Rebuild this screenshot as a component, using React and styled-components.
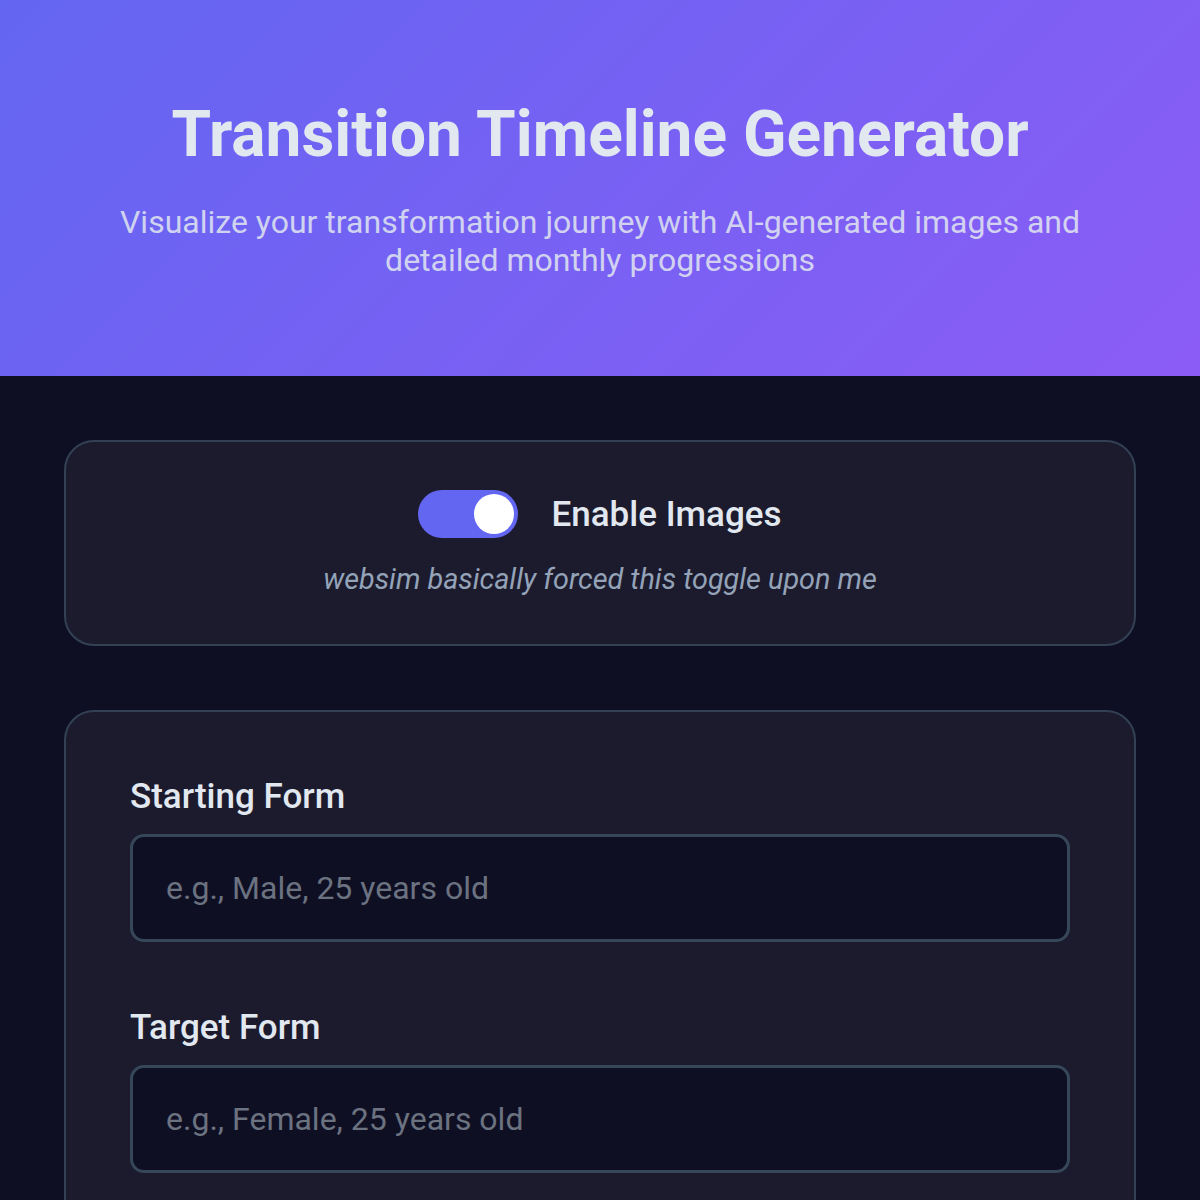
import React, { useState } from "react";
import styled, { createGlobalStyle } from "styled-components";

const Global = createGlobalStyle`
  html, body { margin: 0; padding: 0; background: #0f0f23; }
  body { font-family: Roboto, "Liberation Sans", sans-serif; }
  * { box-sizing: border-box; }
`;

const Page = styled.div`
  min-height: 1200px;
  background: #0f0f23;
`;

const Hero = styled.header`
  height: 376px;
  background: linear-gradient(135deg, #6366f1 0%, #8b5cf6 100%);
  display: flex;
  flex-direction: column;
  align-items: center;
  padding-top: 95px;
  text-align: center;
`;

const Title = styled.h1`
  margin: 0;
  font-size: 64px;
  font-weight: 700;
  line-height: 80px;
  color: #e2e8f0;
`;

const Subtitle = styled.p`
  margin: 28px 0 0;
  font-size: 32px;
  line-height: 38px;
  font-weight: 400;
  color: rgba(226, 232, 240, 0.85);
  max-width: 1000px;
`;

const Main = styled.main`
  padding: 64px 64px;
  display: flex;
  flex-direction: column;
  gap: 64px;
`;

const Card = styled.section`
  background: #1c1b2e;
  border: 2px solid #334155;
  border-radius: 30px;
  padding: ${(p) => p.$pad || "63px 64px"};
`;

const ToggleCard = styled(Card)`
  display: flex;
  flex-direction: column;
  align-items: center;
  gap: 24px;
`;

const ToggleRow = styled.label`
  display: flex;
  align-items: center;
  gap: 33px;
  cursor: pointer;
`;

const Switch = styled.span`
  width: 100px;
  height: 48px;
  border-radius: 24px;
  background: ${(p) => (p.$on ? "#6366f1" : "#475569")};
  display: flex;
  align-items: center;
  justify-content: ${(p) => (p.$on ? "flex-end" : "flex-start")};
  padding: 0 4px;
`;

const Knob = styled.span`
  width: 40px;
  height: 40px;
  border-radius: 50%;
  background: #ffffff;
`;

const ToggleLabel = styled.span`
  font-size: 35px;
  font-weight: 500;
  color: #e2e8f0;
`;

const Note = styled.p`
  margin: 0;
  font-size: 28.8px;
  font-style: italic;
  color: #94a3b8;
`;

const Field = styled.div`
  display: flex;
  flex-direction: column;
  gap: 15px;
  & + & { margin-top: 64px; }
`;

const Label = styled.label`
  font-size: 35px;
  font-weight: 500;
  color: #e2e8f0;
  line-height: 44px;
`;

const Input = styled.input`
  height: 108px;
  border: 3px solid #36475a;
  border-radius: 14px;
  background: #0f0f23;
  padding: 0 33px;
  font-family: Roboto, "Liberation Sans", sans-serif;
  font-size: 32px;
  color: #e2e8f0;
  outline: none;
  &::placeholder { color: #6b7280; }
`;

export default function App() {
  const [on, setOn] = useState(true);
  return (
    <Page>
      <Global />
      <Hero>
        <Title>Transition Timeline Generator</Title>
        <Subtitle>
          Visualize your transformation journey with AI-generated images and detailed monthly progressions
        </Subtitle>
      </Hero>
      <Main>
        <ToggleCard $pad="48px 64px 48px">
          <ToggleRow onClick={() => setOn(!on)}>
            <Switch $on={on}>
              <Knob />
            </Switch>
            <ToggleLabel>Enable Images</ToggleLabel>
          </ToggleRow>
          <Note>websim basically forced this toggle upon me</Note>
        </ToggleCard>
        <Card>
          <Field>
            <Label>Starting Form</Label>
            <Input placeholder="e.g., Male, 25 years old" />
          </Field>
          <Field>
            <Label>Target Form</Label>
            <Input placeholder="e.g., Female, 25 years old" />
          </Field>
        </Card>
      </Main>
    </Page>
  );
}
